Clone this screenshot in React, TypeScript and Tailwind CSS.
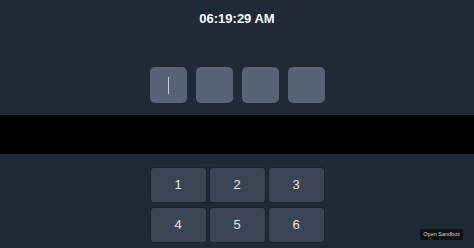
const keys = ["1", "2", "3", "4", "5", "6"];

export default function App() {
  return (
    <div
      className="h-screen bg-[#1f2937] text-white overflow-hidden"
      style={{ fontFamily: '"Liberation Sans", Arial, sans-serif' }}
    >
      {/* Clock */}
      <div className="pt-[11px] text-center text-[13px] font-bold leading-[16px]">
        06:19:29 AM
      </div>

      {/* PIN boxes */}
      <div className="mt-[40px] flex justify-center gap-[9px]">
        {[0, 1, 2, 3].map((i) => (
          <div
            key={i}
            className="w-[37px] h-[36px] rounded-[5px] bg-[#586475] flex items-center justify-center"
          >
            {i === 0 && <div className="w-px h-[17px] bg-[#c7cdd6]" />}
          </div>
        ))}
      </div>

      {/* Black band */}
      <div className="mt-[12px] h-[39px] bg-black" />

      {/* Keypad */}
      <div className="mt-[14px] grid grid-cols-[55px_55px_55px] justify-center gap-x-[4px] gap-y-[6px]">
        {keys.map((k) => (
          <button
            key={k}
            className="h-[34px] rounded-[3px] bg-[#3a4454] shadow-[0_0_0_1px_#1b222d] text-[13px] text-[#e5e7eb]"
          >
            {k}
          </button>
        ))}
      </div>

      {/* Sandbox badge */}
      <div className="fixed right-[11px] bottom-[8px] rounded-[2px] bg-[#111214] px-[3px] h-[11px] flex items-center text-[5.5px] text-[#d4d4d4]">
        Open Sandbox
      </div>
    </div>
  );
}
